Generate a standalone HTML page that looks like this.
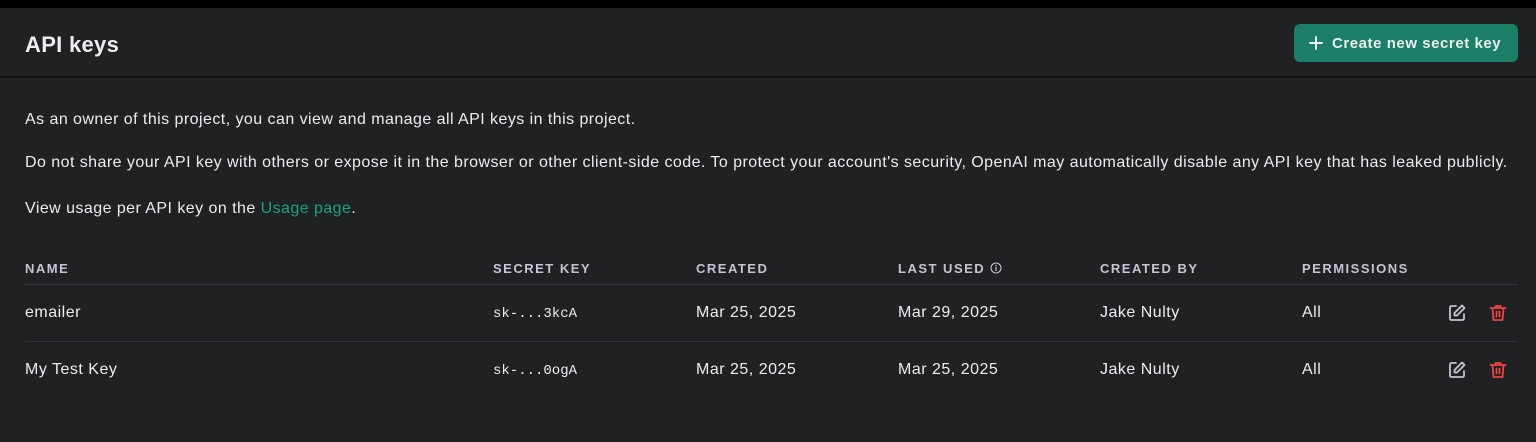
<!DOCTYPE html>
<html><head><style>
*{margin:0;padding:0;box-sizing:border-box}
body{width:1536px;height:442px;background:#202123;font-family:"Liberation Sans",sans-serif;color:#ececf1;position:relative;overflow:hidden}
.top{position:absolute;left:0;top:0;width:1536px;height:8px;background:#000}
.hdr{position:absolute;left:0;top:8px;width:1536px;height:70px;border-bottom:2px solid #141416}
.title{position:absolute;left:25px;top:32px;font-size:22px;font-weight:bold;color:#ececf1;letter-spacing:0.3px}
.btn{position:absolute;left:1294px;top:24px;width:224px;height:38px;background:#1a7f64;border-radius:6px;color:#ececf1;font-size:15px;font-weight:bold;line-height:40px;padding-left:38px;letter-spacing:0.55px;white-space:nowrap}
.btn .plus{position:absolute;left:15px;top:12px}
.p{position:absolute;left:25px;font-size:16px;letter-spacing:0.45px;color:#ececf1;white-space:nowrap}
.p a{color:#19a37f;text-decoration:none}
.th{position:absolute;top:261px;font-size:13px;font-weight:bold;color:#c5c5d2;letter-spacing:1.5px}
.line{position:absolute;left:25px;width:1493px;height:1px;background:#343541}
.c{position:absolute;font-size:16px;letter-spacing:0.5px;color:#ececf1;white-space:nowrap}
.m{font-family:"Liberation Mono",monospace;font-size:14px;letter-spacing:0}
svg.i{position:absolute}
</style></head><body>
<div class="top"></div>
<div class="hdr"></div>
<div class="title">API keys</div>
<div class="btn"><svg class="plus" width="14" height="14" viewBox="0 0 14 14"><path d="M7 1v12M1 7h12" stroke="#ececf1" stroke-width="2" stroke-linecap="round"/></svg>Create new secret key</div>
<div class="p" style="top:111px">As an owner of this project, you can view and manage all API keys in this project.</div>
<div class="p" style="top:154px">Do not share your API key with others or expose it in the browser or other client-side code. To protect your account's security, OpenAI may automatically disable any API key that has leaked publicly.</div>
<div class="p" style="top:200px">View usage per API key on the <a>Usage page</a>.</div>
<div class="th" style="left:25px">NAME</div>
<div class="th" style="left:493px">SECRET KEY</div>
<div class="th" style="left:696px">CREATED</div>
<div class="th" style="left:898px">LAST USED <svg width="12" height="12" viewBox="0 0 12 12" style="vertical-align:-1px;margin-left:0"><circle cx="6" cy="6" r="5" fill="none" stroke="#c5c5d2" stroke-width="1.1"/><path d="M6 5.2v3.3M6 3.3v.3" stroke="#c5c5d2" stroke-width="1.2" stroke-linecap="round"/></svg></div>
<div class="th" style="left:1100px">CREATED BY</div>
<div class="th" style="left:1302px">PERMISSIONS</div>
<div class="line" style="top:284px"></div>
<div class="line" style="top:341px"></div>

<div class="c" style="left:25px;top:304px">emailer</div>
<div class="c m" style="left:493px;top:306px">sk-...3kcA</div>
<div class="c" style="left:696px;top:304px">Mar 25, 2025</div>
<div class="c" style="left:898px;top:304px">Mar 29, 2025</div>
<div class="c" style="left:1100px;top:304px">Jake Nulty</div>
<div class="c" style="left:1302px;top:304px">All</div>

<div class="c" style="left:25px;top:361px">My Test Key</div>
<div class="c m" style="left:493px;top:363px">sk-...0ogA</div>
<div class="c" style="left:696px;top:361px">Mar 25, 2025</div>
<div class="c" style="left:898px;top:361px">Mar 25, 2025</div>
<div class="c" style="left:1100px;top:361px">Jake Nulty</div>
<div class="c" style="left:1302px;top:361px">All</div>

<svg class="i" style="left:1447px;top:303px" width="20" height="20" viewBox="0 0 20 20" fill="none" stroke="#c5c5d2" stroke-width="1.8" stroke-linecap="round" stroke-linejoin="round"><path d="M9 3H4.5A1.5 1.5 0 0 0 3 4.5v11A1.5 1.5 0 0 0 4.5 17h11a1.5 1.5 0 0 0 1.5-1.5V11"/><path d="M15 2.5l2.5 2.5L10 12.5H7.5V10z"/></svg>
<svg class="i" style="left:1488px;top:303px" width="20" height="20" viewBox="0 0 20 20" fill="none" stroke="#ef4146" stroke-width="1.8" stroke-linecap="round" stroke-linejoin="round"><path d="M2.5 5h15M7.5 5V3h5v2M4.5 5l1 12h9l1-12M8.5 8.5v5M11.5 8.5v5"/></svg>
<svg class="i" style="left:1447px;top:360px" width="20" height="20" viewBox="0 0 20 20" fill="none" stroke="#c5c5d2" stroke-width="1.8" stroke-linecap="round" stroke-linejoin="round"><path d="M9 3H4.5A1.5 1.5 0 0 0 3 4.5v11A1.5 1.5 0 0 0 4.5 17h11a1.5 1.5 0 0 0 1.5-1.5V11"/><path d="M15 2.5l2.5 2.5L10 12.5H7.5V10z"/></svg>
<svg class="i" style="left:1488px;top:360px" width="20" height="20" viewBox="0 0 20 20" fill="none" stroke="#ef4146" stroke-width="1.8" stroke-linecap="round" stroke-linejoin="round"><path d="M2.5 5h15M7.5 5V3h5v2M4.5 5l1 12h9l1-12M8.5 8.5v5M11.5 8.5v5"/></svg>
</body></html>
